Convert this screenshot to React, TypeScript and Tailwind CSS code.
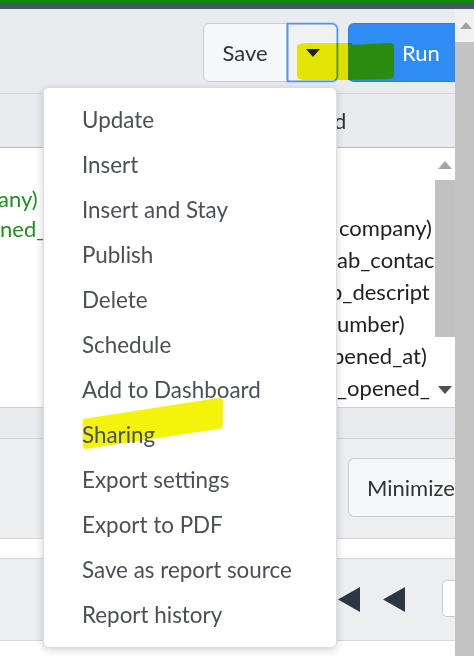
import React from 'react';

const items = [
  'Update',
  'Insert',
  'Insert and Stay',
  'Publish',
  'Delete',
  'Schedule',
  'Add to Dashboard',
  'Sharing',
  'Export settings',
  'Export to PDF',
  'Save as report source',
  'Report history',
];

const font = { fontFamily: 'Lato, "Open Sans", sans-serif' };

const App = () => {
  return (
    <div className="relative w-[474px] h-[656px] overflow-hidden bg-white flex flex-col" style={font}>
      {/* top bars */}
      <div className="h-[3px] bg-[#128a12]" />
      <div className="h-[6px] bg-[#4a5566]" />

      <div className="flex flex-1 min-h-0">
        {/* main */}
        <div className="w-[455px] flex flex-col overflow-hidden">
          {/* toolbar */}
          <div className="relative h-[84px] bg-[#e9ebee] flex justify-end items-start pt-[14px]">
            <div className="flex">
              <button className="h-[59px] w-[84px] bg-[#f6f7f9] border border-[#c9cdd2] rounded-l-[6px] text-[22px] text-[#333]">
                Save
              </button>
              <button className="h-[59px] w-[51px] bg-[#eff1f3] rounded-r-[6px] shadow-[inset_0_0_0_1.5px_#4b96f0,0_0_0_1px_rgba(75,150,240,0.25)] flex items-center justify-center">
                <svg width="14" height="8" viewBox="0 0 14 8">
                  <path d="M0 0h14L7 8z" fill="#222" />
                </svg>
              </button>
            </div>
            <button className="ml-[10px] h-[59px] w-[107px] bg-[#2f8cf2] border border-[#2a7fe0] border-r-0 rounded-l-[6px] text-[22px] text-white text-left pl-[53px]">
              Run
            </button>
            <svg className="absolute left-0 top-0 pointer-events-none" width="455" height="84">
              <path
                d="M297 37 Q298 34 310 34 L352 34 L352 71 L305 71 Q297 71 297 66 Z"
                fill="#f2f204"
                style={{ mixBlendMode: 'multiply' }}
              />
              <path d="M348 36 L390 34 Q394 34 394 38 L394 67 Q393 70 388 70 L348 71 Z" fill="#2a8b0f" />
            </svg>
          </div>

          {/* header row */}
          <div className="h-[55px] bg-[#e9ebee] border-t border-[#d4d6d9] border-b border-b-[#b9bcc0] flex items-center">
            <span className="ml-[334px] text-[22px] text-[#333]">d</span>
          </div>

          {/* content */}
          <div className="h-[259px] bg-white flex">
            <div className="w-[43px] overflow-hidden pt-[36px] text-[22px] leading-[30px] text-[#1f8f1f] whitespace-nowrap">
              <div className="-ml-[2px]">any)</div>
              <div>ned_</div>
            </div>
            <div className="flex-1" />
            <div className="w-[98px] overflow-hidden pt-[64px] text-[22px] leading-[32px] text-[#222] whitespace-nowrap">
              <div className="ml-[2px]">company)</div>
              <div>ab_contac</div>
              <div className="-ml-[7px]">b_descript</div>
              <div>umber)</div>
              <div className="-ml-[5px]">pened_at)</div>
              <div>_opened_</div>
            </div>
            <div className="w-[20px] bg-white flex flex-col items-center">
              <svg className="mt-[13px]" width="14" height="8" viewBox="0 0 14 8">
                <path d="M7 0L14 8H0z" fill="#a6a6a6" />
              </svg>
              <div className="mt-[11px] w-[20px] h-[157px] bg-[#c1c1c1]" />
              <svg className="mt-[49px]" width="14" height="8" viewBox="0 0 14 8">
                <path d="M0 0h14L7 8z" fill="#505050" />
              </svg>
            </div>
          </div>

          {/* band */}
          <div className="h-[31px] bg-[#e9ebee] border-t border-[#cfd2d5]" />

          {/* minimize area */}
          <div className="h-[100px] bg-[#eceef0] border-t border-[#cfd2d5] flex justify-end items-start pt-[19px]">
            <button className="h-[59px] w-[107px] bg-[#f6f7f9] border border-[#c9cdd2] border-r-0 rounded-l-[6px] text-[22px] text-[#333] text-left pl-[18px]">
              Minimize
            </button>
          </div>

          <div className="h-[20px] bg-white border-t border-[#d6d8db]" />

          {/* pagination */}
          <div className="h-[82px] bg-[#eceef0] border-t border-[#d6d8db] flex items-center justify-end">
            <div className="flex items-center gap-[23px] mr-[37px]">
              <svg width="22" height="25" viewBox="0 0 22 25">
                <path d="M0 12.5L22 0V25z" fill="#2d3643" />
              </svg>
              <svg width="22" height="25" viewBox="0 0 22 25">
                <path d="M0 12.5L22 0V25z" fill="#2d3643" />
              </svg>
            </div>
            <div className="w-[13px] h-[37px] bg-white border border-[#c9cdd2] border-r-0 rounded-l-[5px] mt-[-2px]" />
          </div>

          <div className="flex-1 bg-white border-t border-[#d6d8db]" />
        </div>

        {/* page scrollbar */}
        <div className="w-[19px] flex flex-col">
          <div className="h-[33px] bg-[#f1f1f1] flex items-center justify-end pr-[2px]">
            <svg width="12" height="7" viewBox="0 0 12 7">
              <path d="M6 0L12 7H0z" fill="#a3a3a3" />
            </svg>
          </div>
          <div className="flex-1 bg-[#c3c3c3]" />
        </div>
      </div>

      {/* dropdown menu */}
      <div className="absolute left-[43px] top-[87px] w-[294px] h-[561px] bg-white border border-[#dcdde0] rounded-[6px] shadow-[0_2px_8px_rgba(0,0,0,0.18)] py-[9px]">
        <svg className="absolute left-0 top-0" width="294" height="561">
          <path
            d="M39 331 L174 310 Q179 309 179 314 L179 337 Q179 341 174 341 L41 361 Q39 361 39 357 Z"
            fill="#f4f40a"
          />
        </svg>
        <ul className="relative">
          {items.map((it) => (
            <li key={it} className="h-[45px] flex items-center pl-[38px] text-[22.4px] text-[#4a5057]">
              {it}
            </li>
          ))}
        </ul>
      </div>
    </div>
  );
};

export default App;
